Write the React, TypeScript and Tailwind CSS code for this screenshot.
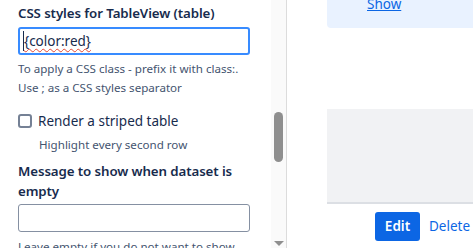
import React from 'react';

const font = { fontFamily: '"Noto Sans", "Open Sans", sans-serif' };

const SettingsPanel: React.FC = () => (
    <div className="w-[271px] h-[248px] overflow-hidden pl-[18px] pr-[21px] text-[#172b4d]">
        <div className="pt-[3px]">
            <label className="block text-[13.3px] font-semibold leading-[20px] tracking-[-0.1px]">CSS styles for TableView (table)</label>
            <div className="mt-[4px] h-[28px] w-[232px] rounded-[3px] border-2 border-[#388bff] px-[3px] flex items-center">
                <span className="text-[13.5px] leading-[20px] border-l border-[#172b4d] underline decoration-wavy decoration-[#e34935] decoration-1 underline-offset-2">
                    {'{color:red}'}
                </span>
            </div>
            <p className="mt-[4px] text-[11.6px] leading-[19px] text-[#44546f]">
                To apply a CSS class - prefix it with class:.
                <br />
                Use ; as a CSS styles separator
            </p>
        </div>

        <div className="mt-[14px] flex items-center gap-[6px]">
            <span className="w-[14px] h-[14px] rounded-[3px] border-2 border-[#758195] bg-white" />
            <span className="text-[13.5px] leading-[20px]">Render a striped table</span>
        </div>
        <p className="mt-[4px] pl-[21px] text-[11.6px] leading-[20px] text-[#44546f]">Highlight every second row</p>

        <label className="block mt-[6px] text-[13.3px] font-semibold leading-[20px] tracking-[-0.1px]">
            Message to show when dataset is empty
        </label>
        <div className="mt-[3px] h-[28px] w-[232px] rounded-[3px] border border-[#8590a2] bg-white" />
        <p className="mt-[5px] text-[11.6px] leading-[19px] text-[#44546f]">
            Leave empty if you do not want to show anything
        </p>
    </div>
);

const Scrollbar: React.FC = () => (
    <div className="relative w-[15px] h-[248px] bg-[#fafafa] border-r border-[#dcdcdc] box-content">
        <div className="absolute left-[3px] top-[112px] w-[9px] h-[50px] rounded-full bg-[#8f8f8f]" />
        <div className="absolute left-[3px] bottom-[2px] w-0 h-0 border-l-[5px] border-r-[5px] border-t-[5px] border-l-transparent border-r-transparent border-t-[#8f8f8f]" />
    </div>
);

export default function App() {
    return (
        <div className="flex w-[473px] h-[248px] bg-white overflow-hidden" style={font}>
            <SettingsPanel />
            <Scrollbar />
            <div className="flex-1 pl-[40px] overflow-hidden">
                <div className="h-[28px] bg-[#e9f2ff] rounded-bl-[4px] pl-[40px] overflow-hidden">
                    <a className="block -mt-[6px] text-[13.5px] leading-[20px] text-[#0c66e4] underline">Show</a>
                </div>
                <div className="mt-[81px] h-[95px] bg-[#f1f2f4] border-b-2 border-[#dcdfe4]" />
                <div className="mt-[8px] pl-[48px] flex items-center gap-[9px]">
                    <button className="h-[29px] w-[45px] rounded-[3px] bg-[#0c66e4] text-white text-[13.5px] font-semibold">Edit</button>
                    <span className="text-[13.5px] text-[#0c66e4] whitespace-nowrap">Delete</span>
                </div>
            </div>
        </div>
    );
}
